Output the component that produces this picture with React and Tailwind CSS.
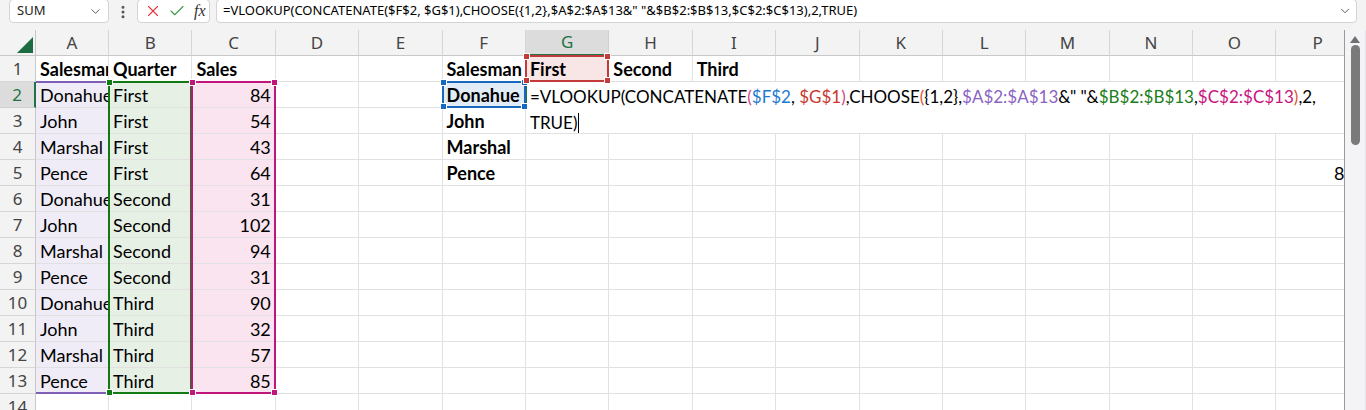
import { ChevronDown, X, Check, EllipsisVertical } from 'lucide-react';

const COLS = ['A', 'B', 'C', 'D', 'E', 'F', 'G', 'H', 'I', 'J', 'K', 'L', 'M', 'N', 'O', 'P'];
const NAMES = ['Donahue', 'John', 'Marshal', 'Pence'];
const QUARTERS = ['First', 'Second', 'Third'];
const SALES = [84, 54, 43, 64, 31, 102, 94, 31, 90, 32, 57, 85];

// contents of the sheet, keyed by "row:col" (col 1 = A)
const cells = {
  '1:1': { text: 'Salesman', bold: true },
  '1:2': { text: 'Quarter', bold: true },
  '1:3': { text: 'Sales', bold: true },
  '1:6': { text: 'Salesman', bold: true },
  '1:7': { text: 'First', bold: true },
  '1:8': { text: 'Second', bold: true },
  '1:9': { text: 'Third', bold: true },
  '2:6': { text: 'Donahue', bold: true },
  '3:6': { text: 'John', bold: true },
  '4:6': { text: 'Marshal', bold: true },
  '5:6': { text: 'Pence', bold: true },
  '5:16': { text: '84', right: true },
};
for (let i = 0; i < 12; i++) {
  cells[`${i + 2}:1`] = { text: NAMES[i % 4] };
  cells[`${i + 2}:2`] = { text: QUARTERS[Math.floor(i / 4)] };
  cells[`${i + 2}:3`] = { text: String(SALES[i]), right: true };
}

const cellBg = (r, c) => {
  if (r >= 2 && r <= 13 && c === 1) return 'bg-[#efebf7]';
  if (r >= 2 && r <= 13 && c === 2) return 'bg-[#e6f0e5]';
  if (r >= 2 && r <= 13 && c === 3) return 'bg-[#f9e4ef]';
  if (r === 2 && c === 6) return 'bg-[#e2ecf7]';
  if (r === 1 && c === 7) return 'bg-[#f8e6e6]';
  return 'bg-white';
};

const GRID = 'grid grid-cols-[36px_73px_repeat(15,83.4px)] grid-rows-[repeat(15,26px)] w-[1360px] col-start-1 row-start-1';

const Handle = ({ pos, color }) => (
  <span className={`absolute w-[7px] h-[7px] border border-white ${color} ${pos}`} />
);

const HeaderCell = ({ c }) => {
  if (c === 0) {
    return (
      <div className="relative bg-[#f3f3f3] border-r border-b border-[#c8c8c8]">
        <svg className="absolute left-[16px] top-[7px]" width="18" height="17" viewBox="0 0 18 17">
          <polygon points="1,16 17,16 17,0" fill="#1d6b40" />
        </svg>
      </div>
    );
  }
  const selected = COLS[c - 1] === 'G';
  return (
    <div
      className={
        selected
          ? 'flex items-center justify-center bg-[#dcdcdc] border-r border-[#d0d0d0] border-b-2 border-b-[#217346] text-[#217346] text-[17px]'
          : 'flex items-center justify-center bg-[#f3f3f3] border-r border-b border-r-[#d6d6d6] border-b-[#c8c8c8] text-[#444] text-[17px]'
      }
    >
      {COLS[c - 1]}
    </div>
  );
};

const RowHeader = ({ r }) => (
  <div
    className={
      r === 2
        ? 'flex items-center justify-center bg-[#dcdcdc] border-b border-[#d0d0d0] border-r-2 border-r-[#217346] text-[#217346] text-[17px]'
        : 'flex items-center justify-center bg-[#f3f3f3] border-b border-r border-b-[#d6d6d6] border-r-[#c8c8c8] text-[#444] text-[17px]'
    }
  >
    {r}
  </div>
);

const Cell = ({ r, c }) => {
  const d = cells[`${r}:${c}`];
  return (
    <div
      className={`flex items-center overflow-hidden whitespace-nowrap border-r border-b border-[#e1e1e1] px-[4px] pt-[2px] text-[18px] text-black font-['Lato',sans-serif] ${cellBg(r, c)} ${
        d?.right ? 'justify-end' : ''
      } ${d?.bold ? 'font-bold' : ''}`}
    >
      {d?.text}
    </div>
  );
};

export default function App() {
  const rows = Array.from({ length: 15 }, (_, i) => i);
  const cols = Array.from({ length: 17 }, (_, i) => i);

  return (
    <div className="w-[1366px] h-[410px] overflow-hidden flex flex-col bg-[#f3f3f3] font-['Noto_Sans',sans-serif]">
      {/* formula bar */}
      <div className="h-[30px] shrink-0 flex items-start gap-[6px] pl-[9px] pr-[9px]">
        <div className="w-[100px] h-[24px] -mt-px flex items-center justify-between pl-[7px] pr-[5px] bg-white border border-[#d4d4d4] rounded-[4px] text-[13px] text-[#222]">
          <span>SUM</span>
          <ChevronDown size={15} strokeWidth={1.5} className="text-[#555]" />
        </div>
        <div className="h-[24px] flex items-center text-[#555]">
          <EllipsisVertical size={16} strokeWidth={2.5} />
        </div>
        <div className="w-[73px] h-[24px] -mt-px flex items-center gap-[6px] pl-[6px] bg-white border border-[#d4d4d4] rounded-[4px]">
          <X size={18} strokeWidth={1.5} className="text-[#e0393e]" />
          <Check size={18} strokeWidth={1.5} className="text-[#3c9a47]" />
          <span className="ml-[2px] text-[16px] italic text-[#333] font-['Liberation_Serif',serif]">fx</span>
        </div>
        <div className="flex-1 h-[24px] -mt-px flex items-center justify-between pl-[6px] pr-[4px] bg-white border border-[#d4d4d4] rounded-[4px] text-[13px] text-black">
          <span className="whitespace-nowrap">
            =VLOOKUP(CONCATENATE($F$2, $G$1),CHOOSE({'{'}1,2{'}'},$A$2:$A$13&amp;" "&amp;$B$2:$B$13,$C$2:$C$13),2,TRUE)
          </span>
          <ChevronDown size={14} strokeWidth={1.5} className="text-[#444]" />
        </div>
      </div>

      <div className="flex flex-1 min-h-0">
        {/* sheet: cell grid with an overlay grid of the same tracks on top */}
        <div className="w-[1345px] shrink-0 overflow-hidden border-r border-[#9a9a9a]">
          <div className="grid">
            <div className={GRID}>
              {rows.map((r) =>
                cols.map((c) =>
                  r === 0 ? (
                    <HeaderCell key={`${r}-${c}`} c={c} />
                  ) : c === 0 ? (
                    <RowHeader key={`${r}-${c}`} r={r} />
                  ) : (
                    <Cell key={`${r}-${c}`} r={r} c={c} />
                  )
                )
              )}
            </div>

            <div className={`${GRID} pointer-events-none`}>
              {/* reference highlight ranges */}
              <div className="relative col-start-2 row-start-3 row-span-12 -mt-px border-t-2 border-b-2 border-[#7f5fb6]" />
              <div className="relative col-start-3 row-start-3 row-span-12 -mt-px -ml-px border-2 border-[#127a12]">
                <Handle pos="-left-[4px] -top-[4px]" color="bg-[#127a12]" />
                <Handle pos="-left-[4px] -bottom-[4px]" color="bg-[#127a12]" />
              </div>
              <div className="relative col-start-4 row-start-3 row-span-12 -mt-px -ml-px border-2 border-[#c0157a]">
                <Handle pos="-left-[4px] -top-[4px]" color="bg-[#c0157a]" />
                <Handle pos="-right-[4px] -top-[4px]" color="bg-[#c0157a]" />
                <Handle pos="-left-[4px] -bottom-[4px]" color="bg-[#c0157a]" />
                <Handle pos="-right-[4px] -bottom-[4px]" color="bg-[#c0157a]" />
              </div>
              <div className="relative col-start-7 row-start-3 -mt-px -ml-px border-2 border-[#1768bf]">
                <Handle pos="-left-[4px] -top-[4px]" color="bg-[#1768bf]" />
                <Handle pos="-right-[4px] -top-[4px]" color="bg-[#1768bf]" />
                <Handle pos="-left-[4px] -bottom-[4px]" color="bg-[#1768bf]" />
                <Handle pos="-right-[4px] -bottom-[4px]" color="bg-[#1768bf]" />
              </div>
              <div className="relative col-start-8 row-start-2 -mt-px -ml-px border-2 border-[#c23a3a]">
                <Handle pos="-left-[4px] -top-[4px]" color="bg-[#c23a3a]" />
                <Handle pos="-right-[4px] -top-[4px]" color="bg-[#c23a3a]" />
                <Handle pos="-left-[4px] -bottom-[4px]" color="bg-[#c23a3a]" />
                <Handle pos="-right-[4px] -bottom-[4px]" color="bg-[#c23a3a]" />
              </div>

              {/* in-cell editor for G2 */}
              <div className="col-start-8 col-span-10 row-start-3 row-span-2 mb-px bg-white pl-[4px] pt-[2px] text-[17px] leading-[26px] text-black whitespace-nowrap font-['Lato',sans-serif]">
                <div>
                  =VLOOKUP(CONCATENATE<span className="text-[#d1477f]">(</span>
                  <span className="text-[#1f7ad0]">$F$2</span>, <span className="text-[#c8382f]">$G$1</span>
                  <span className="text-[#d1477f]">)</span>,CHOOSE<span className="text-[#e0552a]">(</span>
                  {'{'}1,2{'}'},<span className="text-[#8a63c4]">$A$2:$A$13</span>&amp;" "&amp;
                  <span className="text-[#1b7d1b]">$B$2:$B$13</span>,<span className="text-[#c8157e]">$C$2:$C$13</span>
                  <span className="text-[#e0552a]">)</span>,2,
                </div>
                <div className="flex items-center">
                  TRUE)<span className="ml-px w-px h-[20px] bg-black" />
                </div>
              </div>
              <div className="col-start-8 row-start-3 -ml-px border-l-2 border-[#217346]" />
            </div>
          </div>
        </div>

        {/* vertical scrollbar */}
        <div className="flex-1 flex flex-col items-center pt-[6px] bg-[#f4f4f6] border-r border-[#e4e4ea]">
          <svg width="10" height="7" viewBox="0 0 10 7">
            <polygon points="5,0 10,7 0,7" fill="#707070" />
          </svg>
          <div className="mt-[2px] w-[9px] h-[100px] rounded-full bg-[#7a7a7a]" />
        </div>
      </div>
    </div>
  );
}
